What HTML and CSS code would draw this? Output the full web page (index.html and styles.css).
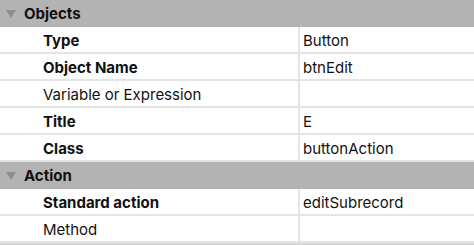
FILE: index.html
```html
<!DOCTYPE html>
<html lang="en">

<head>
    <meta charset="UTF-8">
    <meta name="viewport" content="width=device-width, initial-scale=1.0">
    <title>Properties</title>
    <link rel="stylesheet" href="styles.css">
</head>

<body>

    <div class="Propiedades">

        <div class="Seccion">
            <span class="Triangulo"></span>
            <span>Objects</span>
        </div>
        <div class="Fila">
            <div class="Nombre fuerte">Type</div>
            <div class="Valor">Button</div>
        </div>
        <div class="Fila">
            <div class="Nombre fuerte">Object Name</div>
            <div class="Valor">btnEdit</div>
        </div>
        <div class="Fila">
            <div class="Nombre">Variable or Expression</div>
            <div class="Valor"></div>
        </div>
        <div class="Fila">
            <div class="Nombre fuerte">Title</div>
            <div class="Valor">E</div>
        </div>
        <div class="Fila">
            <div class="Nombre fuerte">Class</div>
            <div class="Valor">buttonAction</div>
        </div>

        <div class="Seccion">
            <span class="Triangulo"></span>
            <span>Action</span>
        </div>
        <div class="Fila">
            <div class="Nombre fuerte">Standard action</div>
            <div class="Valor">editSubrecord</div>
        </div>
        <div class="Fila">
            <div class="Nombre">Method</div>
            <div class="Valor"></div>
        </div>

        <div class="Pie"></div>

    </div>

</body>

</html>
```

FILE: styles.css
```css
body {
    font-family: 'Inter', 'Liberation Sans', sans-serif;
    font-size: 15px;
    background-color: #fff;
    color: #111;
    margin: 0;
}


.Propiedades {
    display: flex;
    flex-direction: column;
    height: 100vh;
}


.Seccion {
    display: flex;
    align-items: center;
    gap: 8px;
    height: 27px;
    padding-left: 6px;
    background-color: #b3b3b3;
    font-weight: bold;
    font-size: 15px;
}


.Triangulo {
    width: 0;
    height: 0;
    border-left: 5px solid transparent;
    border-right: 5px solid transparent;
    border-top: 8px solid #8e8e8e;
}


.Fila {
    display: grid;
    grid-template-columns: 300px 1fr;
    height: 25px;
    border-bottom: 2px solid #e4e4e4;
}


.Nombre {
    display: flex;
    align-items: center;
    padding-left: 43px;
    padding-top: 2px;
    border-right: 2px solid #e4e4e4;
}


.fuerte {
    font-weight: bold;
}


.Valor {
    display: flex;
    align-items: center;
    padding-left: 3px;
    padding-top: 2px;
}


.Pie {
    flex: 1;
    background-color: #d6d6d6;
}
```
